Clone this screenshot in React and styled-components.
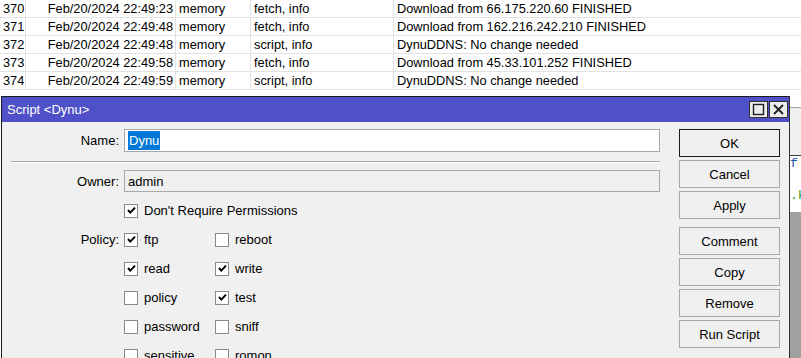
import React from 'react';
import styled, { createGlobalStyle } from 'styled-components';

const logRows = [
  { id: 370, time: 'Feb/20/2024 22:49:23', buffer: 'memory', topics: 'fetch, info', message: 'Download from 66.175.220.60 FINISHED' },
  { id: 371, time: 'Feb/20/2024 22:49:48', buffer: 'memory', topics: 'fetch, info', message: 'Download from 162.216.242.210 FINISHED' },
  { id: 372, time: 'Feb/20/2024 22:49:48', buffer: 'memory', topics: 'script, info', message: 'DynuDDNS: No change needed' },
  { id: 373, time: 'Feb/20/2024 22:49:58', buffer: 'memory', topics: 'fetch, info', message: 'Download from 45.33.101.252 FINISHED' },
  { id: 374, time: 'Feb/20/2024 22:49:59', buffer: 'memory', topics: 'script, info', message: 'DynuDDNS: No change needed' },
];

const policies = [
  ['ftp', true, 'reboot', false],
  ['read', true, 'write', true],
  ['policy', false, 'test', true],
  ['password', false, 'sniff', false],
  ['sensitive', false, 'romon', false],
];

const Check = ({ checked }) => (
  <Box>
    {checked && (
      <svg width="11" height="11" viewBox="0 0 11 11">
        <path d="M2 5 L4.3 7.6 L9 2.6" fill="none" stroke="#000" strokeWidth="2" />
      </svg>
    )}
  </Box>
);

const App = () => {
  return (
    <Page>
      <GlobalStyle />
      <LogTable>
        {logRows.map((row) => (
          <LogRow key={row.id}>
            <Cell>{row.id}</Cell>
            <Cell $right>{row.time}</Cell>
            <Cell>{row.buffer}</Cell>
            <Cell>{row.topics}</Cell>
            <Cell $last>{row.message}</Cell>
          </LogRow>
        ))}
      </LogTable>
      <Desk>
        <Dialog>
          <TitleBar>
            <TitleText>Script &lt;Dynu&gt;</TitleText>
            <TitleButtons>
              <TitleButton>
                <svg width="13" height="13" viewBox="0 0 13 13">
                  <rect x="1.5" y="1.5" width="10" height="10" fill="none" stroke="#202020" strokeWidth="1.4" />
                </svg>
              </TitleButton>
              <TitleButton>
                <svg width="13" height="13" viewBox="0 0 13 13">
                  <path d="M2 2 L11 11 M11 2 L2 11" stroke="#202020" strokeWidth="1.8" />
                </svg>
              </TitleButton>
            </TitleButtons>
          </TitleBar>
          <Body>
            <Form>
              <FieldRow $h={23}>
                <Label>Name:</Label>
                <Input>
                  <Selected>Dynu</Selected>
                </Input>
              </FieldRow>
              <Separator />
              <FieldRow $h={22}>
                <Label>Owner:</Label>
                <Input $disabled>admin</Input>
              </FieldRow>
              <Checks>
                <FieldRow $h={29}>
                  <Label />
                  <CheckItem>
                    <Check checked />
                    Don't Require Permissions
                  </CheckItem>
                </FieldRow>
                {policies.map(([a, ac, b, bc], i) => (
                  <FieldRow $h={29} key={a}>
                    <Label>{i === 0 ? 'Policy:' : ''}</Label>
                    <PolicyPair>
                      <CheckItem>
                        <Check checked={ac} />
                        {a}
                      </CheckItem>
                      <CheckItem>
                        <Check checked={bc} />
                        {b}
                      </CheckItem>
                    </PolicyPair>
                  </FieldRow>
                ))}
              </Checks>
            </Form>
            <Buttons>
              <Button $default>OK</Button>
              <Button>Cancel</Button>
              <Button>Apply</Button>
              <Button $gap>Comment</Button>
              <Button>Copy</Button>
              <Button>Remove</Button>
              <Button>Run Script</Button>
            </Buttons>
          </Body>
        </Dialog>
        <BehindWindow>
          <BehindTop />
          <BehindTabs />
          <BehindCode>
            <CodeLine $color="#1f4fb0">f</CodeLine>
            <CodeLine $color="#2a9a2a" $top={32}>.k</CodeLine>
          </BehindCode>
          <BehindGray />
        </BehindWindow>
      </Desk>
    </Page>
  );
};

const GlobalStyle = createGlobalStyle`
  html, body {
    margin: 0;
    padding: 0;
    background: #fff;
    overflow: hidden;
  }
  body {
    font-family: "Liberation Sans", Arial, sans-serif;
    font-size: 13px;
    color: #000;
  }
`;

const Page = styled.div`
  width: 801px;
  height: 358px;
  overflow: hidden;
`;

const LogTable = styled.div`
  height: 96px;
`;

const LogRow = styled.div`
  display: grid;
  grid-template-columns: 26px 150px 75px 143px 1fr;
  height: 18px;
  border-bottom: 1px solid #e2e2e2;
  box-sizing: border-box;
`;

const Cell = styled.div`
  padding: 0 ${(p) => (p.$right ? '2px' : '3px')};
  text-align: ${(p) => (p.$right ? 'right' : 'left')};
  line-height: 18px;
  font-size: 12.8px;
  white-space: nowrap;
  overflow: hidden;
  border-right: ${(p) => (p.$last ? 'none' : '1px solid #e2e2e2')};
`;

const Desk = styled.div`
  display: flex;
  height: 262px;
  padding-left: 1px;
  overflow: hidden;
`;

const Dialog = styled.div`
  width: 789px;
  flex: none;
  border: 1px solid #1a1a1a;
  border-bottom: none;
  border-right-color: #303030;
  background: #f0f0f0;
  box-sizing: border-box;
  display: flex;
  flex-direction: column;
  overflow: hidden;
`;

const TitleBar = styled.div`
  flex: none;
  height: 25px;
  background: #5050c8;
  display: flex;
  align-items: center;
  justify-content: space-between;
  padding: 0 1px 0 5px;
`;

const TitleText = styled.span`
  color: #fff;
  font-size: 13px;
`;

const TitleButtons = styled.div`
  display: flex;
  gap: 1px;
`;

const TitleButton = styled.div`
  width: 19px;
  height: 17px;
  border: 1px solid #303030;
  background: #ececec;
  display: flex;
  align-items: center;
  justify-content: center;
  box-sizing: border-box;
`;

const Body = styled.div`
  flex: none;
  display: flex;
  align-items: flex-start;
  padding-top: 7px;
`;

const Form = styled.div`
  width: 658px;
  display: flex;
  flex-direction: column;
`;

const FieldRow = styled.div`
  flex: none;
  display: grid;
  grid-template-columns: 117px 1fr;
  column-gap: 5px;
  align-items: center;
  height: ${(p) => p.$h}px;
`;

const Label = styled.div`
  text-align: right;
  white-space: nowrap;
`;

const Input = styled.div`
  height: 100%;
  box-sizing: border-box;
  border: 1px solid #a8a8a8;
  background: ${(p) => (p.$disabled ? '#f0f0f0' : '#fff')};
  display: flex;
  align-items: center;
  padding-left: 3px;
`;

const Selected = styled.span`
  background: #0078d7;
  color: #fff;
  line-height: 19px;
  padding: 0 1px;
`;

const Separator = styled.div`
  flex: none;
  margin: 9px 0 7px 9px;
  height: 1px;
  background: #a8a8a8;
  border-bottom: 1px solid #fff;
`;

const Checks = styled.div`
  flex: none;
  margin-top: 4px;
  display: flex;
  flex-direction: column;
`;

const PolicyPair = styled.div`
  display: grid;
  grid-template-columns: 91px 1fr;
`;

const CheckItem = styled.label`
  display: flex;
  align-items: center;
  gap: 6px;
  white-space: nowrap;
`;

const Box = styled.span`
  width: 14px;
  height: 14px;
  box-sizing: border-box;
  border: 1px solid #8a8a8a;
  background: #fff;
  display: inline-flex;
  align-items: center;
  justify-content: center;
  flex: none;
`;

const Buttons = styled.div`
  flex: none;
  margin-left: 19px;
  width: 101px;
  display: flex;
  flex-direction: column;
  gap: 3px;
`;

const Button = styled.div`
  flex: none;
  height: 28px;
  box-sizing: border-box;
  border: 1px solid ${(p) => (p.$default ? '#1a1a1a' : '#a8a8a8')};
  background: #f0f0f0;
  display: flex;
  align-items: center;
  justify-content: center;
  margin-top: ${(p) => (p.$gap ? '5px' : '0')};
`;

const BehindWindow = styled.div`
  flex: 1;
  display: flex;
  flex-direction: column;
  overflow: hidden;
`;

const BehindTop = styled.div`
  flex: none;
  height: 11px;
  background: #fff;
  border-bottom: 1px solid #a0a0a0;
`;

const BehindTabs = styled.div`
  flex: none;
  height: 47px;
  background: #f0f0f0;
  border-bottom: 1px solid #404040;
`;

const BehindCode = styled.div`
  flex: none;
  height: 56px;
  background: #fff;
  position: relative;
  overflow: hidden;
  font-family: "Liberation Mono", monospace;
  font-size: 13px;
`;

const CodeLine = styled.span`
  position: absolute;
  left: 0;
  top: ${(p) => p.$top || 0}px;
  color: ${(p) => p.$color};
  line-height: 15px;
`;

const BehindGray = styled.div`
  flex: 1;
  background: #a0a0a0;
`;

export default App;
